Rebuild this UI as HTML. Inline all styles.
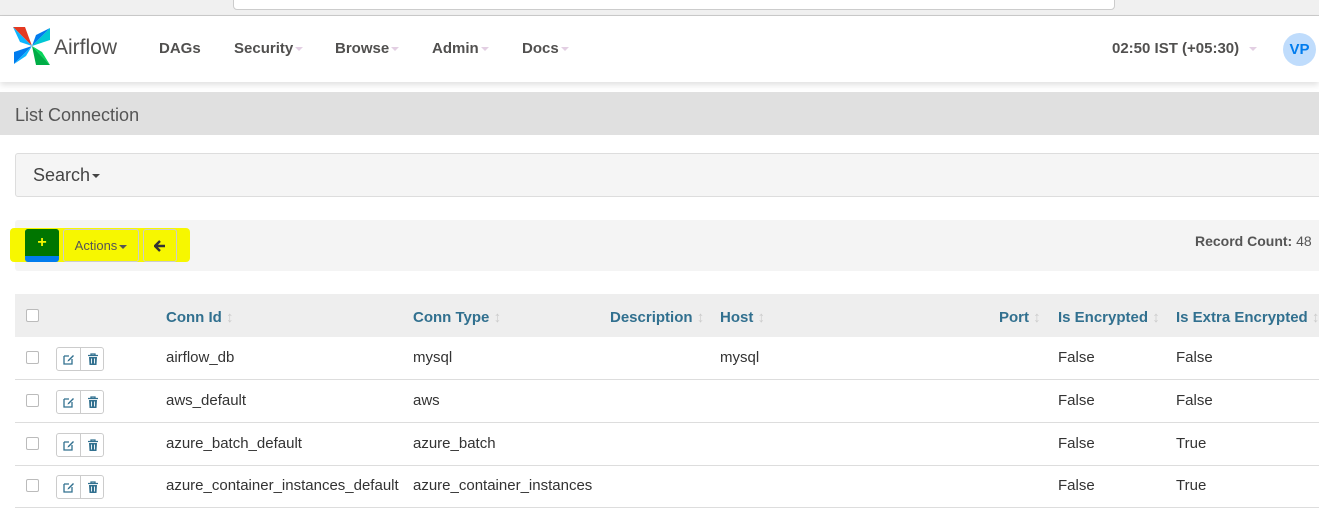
<!DOCTYPE html>
<html><head><meta charset="utf-8"><style>
body{margin:0;width:1319px;height:496px;overflow:hidden;background:#fff;font-family:"Liberation Sans",sans-serif;color:#333;position:relative}
.abs{position:absolute}
.chrome{left:0;top:0;width:1319px;height:15px;background:#f0f0f0;border-bottom:1px solid #ccc}
.url{left:233px;top:-6px;width:880px;height:14px;background:#fff;border:1px solid #ccc;border-radius:4px}
.nav{left:0;top:16px;width:1319px;height:66px;background:#fff;box-shadow:0 3px 6px rgba(0,0,0,.12)}
.nav .item{position:absolute;top:24px;font-size:15px;font-weight:bold;color:#51504f}
.caret{display:inline-block;width:0;height:0;border-left:4px solid transparent;border-right:4px solid transparent;border-top:4px solid #e3cfe3;margin-left:2px;vertical-align:middle}
.title{left:0;top:92px;width:1319px;height:43px;background:#e0e0e0;font-size:18px;color:#555}
.search{left:15px;top:153px;width:1310px;height:42px;background:#f5f5f5;border:1px solid #ddd;border-radius:3px}
.tool{left:15px;top:220px;width:1310px;height:51px;background:#f4f4f4;border-radius:3px}
.thead{left:15px;top:294px;width:1310px;height:43px;background:#eee}
.c{position:absolute;font-size:15px;white-space:nowrap}
.h{font-weight:bold;color:#31708f}
.sort{color:#ccc;font-weight:normal}
.row{position:absolute;left:15px;width:1310px;height:42px;border-bottom:1px solid #ddd}
.cb{position:absolute;width:11px;height:11px;border:1px solid #bbb;border-radius:2px;background:#fff}
.btns{position:absolute;left:41px;width:46px;height:22px;border:1px solid #ccc;border-radius:3px;background:#fff}
.btns svg{position:absolute;top:5px}
</style></head><body>
<div class="abs chrome"></div><div class="abs url"></div>
<div class="abs nav">
<svg class="abs" style="left:12px;top:10px" width="40" height="40" viewBox="0 0 40 40">
<path d="M20 20 L1 1 L13 1 Z" fill="#e43921"/><path d="M20 20 L1 1 L8 16 Z" fill="#0cb6ff"/>
<path d="M20 20 L38 2 L38 14 Z" fill="#00c7d4"/><path d="M20 20 L38 2 L24 9 Z" fill="#017cee"/>
<path d="M20 20 L38 39 L24 39 Z" fill="#00ad46"/><path d="M20 20 L38 39 L30 26 Z" fill="#04d659"/>
<path d="M20 20 L2 38 L2 26 Z" fill="#017cee"/><path d="M20 20 L2 38 L14 30 Z" fill="#0cb6ff"/>
</svg>
<div class="item" style="left:54px;top:20px;font-size:21px;font-weight:normal;color:#51504f">Airflow</div>
<div class="item" style="left:159px">DAGs</div>
<div class="item" style="left:234px">Security<span class="caret"></span></div>
<div class="item" style="left:335px">Browse<span class="caret"></span></div>
<div class="item" style="left:432px">Admin<span class="caret"></span></div>
<div class="item" style="left:522px">Docs<span class="caret"></span></div>
<div class="item" style="left:1112px">02:50 IST (+05:30)<span class="caret" style="margin-left:10px"></span></div>
<div class="abs" style="left:1283px;top:17px;width:33px;height:33px;border-radius:50%;background:#bfdcfc;color:#017cee;font-weight:bold;font-size:15px;text-align:center;line-height:33px">VP</div>
</div>
<div class="abs title"><span style="position:absolute;left:15px;top:13px">List Connection</span></div>
<div class="abs search"><span style="position:absolute;left:17px;top:11px;font-size:18px;color:#444">Search<span class="caret" style="border-top-color:#444"></span></span></div>
<div class="abs tool">
<div class="abs" style="left:-5px;top:8px;width:180px;height:34px;background:#f7f700;border-radius:4px"></div>
<div class="abs" style="left:10px;top:9px;width:34px;height:33px;background:#017cee;border-radius:3px"></div>
<div class="abs" style="left:10px;top:9px;width:34px;height:27px;background:#007500;border-radius:3px 3px 0 0;color:#f7f700;font-weight:bold;text-align:center;line-height:27px;font-size:16px">+</div>
<div class="abs" style="left:48px;top:9px;width:74px;height:31px;border:1px solid #ccc;border-radius:3px;font-size:13px;color:#555;text-align:center;line-height:31px">Actions<span class="caret" style="border-top-color:#555"></span></div>
<div class="abs" style="left:128px;top:9px;width:32px;height:31px;border:1px solid #ccc;border-radius:3px">
<svg style="position:absolute;left:10px;top:10px" width="12" height="12" viewBox="0 0 12 12"><path d="M6 1 L1 6 L6 11 M1 6 H11" stroke="#333" stroke-width="2.4" fill="none"/></svg></div>
<div class="abs" style="left:1180px;top:13px;font-size:14px;color:#555"><b>Record Count:</b> 48</div>
</div>
<div class="abs thead">
<div class="cb" style="left:11px;top:15px"></div>
<div class="c h" style="left:151px;top:15px">Conn Id <span class="sort">↕</span></div>
<div class="c h" style="left:398px;top:15px">Conn Type <span class="sort">↕</span></div>
<div class="c h" style="left:595px;top:15px">Description <span class="sort">↕</span></div>
<div class="c h" style="left:705px;top:15px">Host <span class="sort">↕</span></div>
<div class="c h" style="left:984px;top:15px">Port <span class="sort">↕</span></div>
<div class="c h" style="left:1043px;top:15px">Is Encrypted <span class="sort">↕</span></div>
<div class="c h" style="left:1161px;top:15px">Is Extra Encrypted <span class="sort">↕</span></div>
</div>
<svg width="0" height="0" style="position:absolute"><defs>
<g id="ed"><path d="M1 3 H6 M1 3 V11 H9 V6" stroke="#31708f" stroke-width="1.3" fill="none"/><path d="M5 7 L10 2 L11 3 L6 8 L4.5 8.5 Z" fill="#31708f"/></g>
<g id="tr"><path d="M1 2.5 H11 M4 2.5 V1 H8 V2.5" stroke="#31708f" stroke-width="1.3" fill="none"/><path d="M2 4 H10 L9.5 12 H2.5 Z" fill="#31708f"/><path d="M4.5 5.5 V10.5 M7.5 5.5 V10.5" stroke="#fff" stroke-width="0.9"/></g>
</defs></svg>
<div class="row" style="top:337px"><div class="cb" style="left:11px;top:14px"></div><div class="btns" style="top:10px"><svg style="left:6px" width="12" height="12"><use href="#ed"/></svg><div style="position:absolute;left:23px;top:0;width:1px;height:22px;background:#ccc"></div><svg style="left:30px" width="12" height="12"><use href="#tr"/></svg></div>
<div class="c" style="left:151px;top:12px">airflow_db</div><div class="c" style="left:398px;top:12px">mysql</div><div class="c" style="left:705px;top:12px">mysql</div><div class="c" style="left:1043px;top:12px">False</div><div class="c" style="left:1161px;top:12px">False</div></div>
<div class="row" style="top:380px"><div class="cb" style="left:11px;top:14px"></div><div class="btns" style="top:10px"><svg style="left:6px" width="12" height="12"><use href="#ed"/></svg><div style="position:absolute;left:23px;top:0;width:1px;height:22px;background:#ccc"></div><svg style="left:30px" width="12" height="12"><use href="#tr"/></svg></div>
<div class="c" style="left:151px;top:12px">aws_default</div><div class="c" style="left:398px;top:12px">aws</div><div class="c" style="left:1043px;top:12px">False</div><div class="c" style="left:1161px;top:12px">False</div></div>
<div class="row" style="top:423px"><div class="cb" style="left:11px;top:14px"></div><div class="btns" style="top:10px"><svg style="left:6px" width="12" height="12"><use href="#ed"/></svg><div style="position:absolute;left:23px;top:0;width:1px;height:22px;background:#ccc"></div><svg style="left:30px" width="12" height="12"><use href="#tr"/></svg></div>
<div class="c" style="left:151px;top:12px">azure_batch_default</div><div class="c" style="left:398px;top:12px">azure_batch</div><div class="c" style="left:1043px;top:12px">False</div><div class="c" style="left:1161px;top:12px">True</div></div>
<div class="row" style="top:465px"><div class="cb" style="left:11px;top:14px"></div><div class="btns" style="top:10px"><svg style="left:6px" width="12" height="12"><use href="#ed"/></svg><div style="position:absolute;left:23px;top:0;width:1px;height:22px;background:#ccc"></div><svg style="left:30px" width="12" height="12"><use href="#tr"/></svg></div>
<div class="c" style="left:151px;top:12px">azure_container_instances_default</div><div class="c" style="left:398px;top:12px">azure_container_instances</div><div class="c" style="left:1043px;top:12px">False</div><div class="c" style="left:1161px;top:12px">True</div></div>
</body></html>
